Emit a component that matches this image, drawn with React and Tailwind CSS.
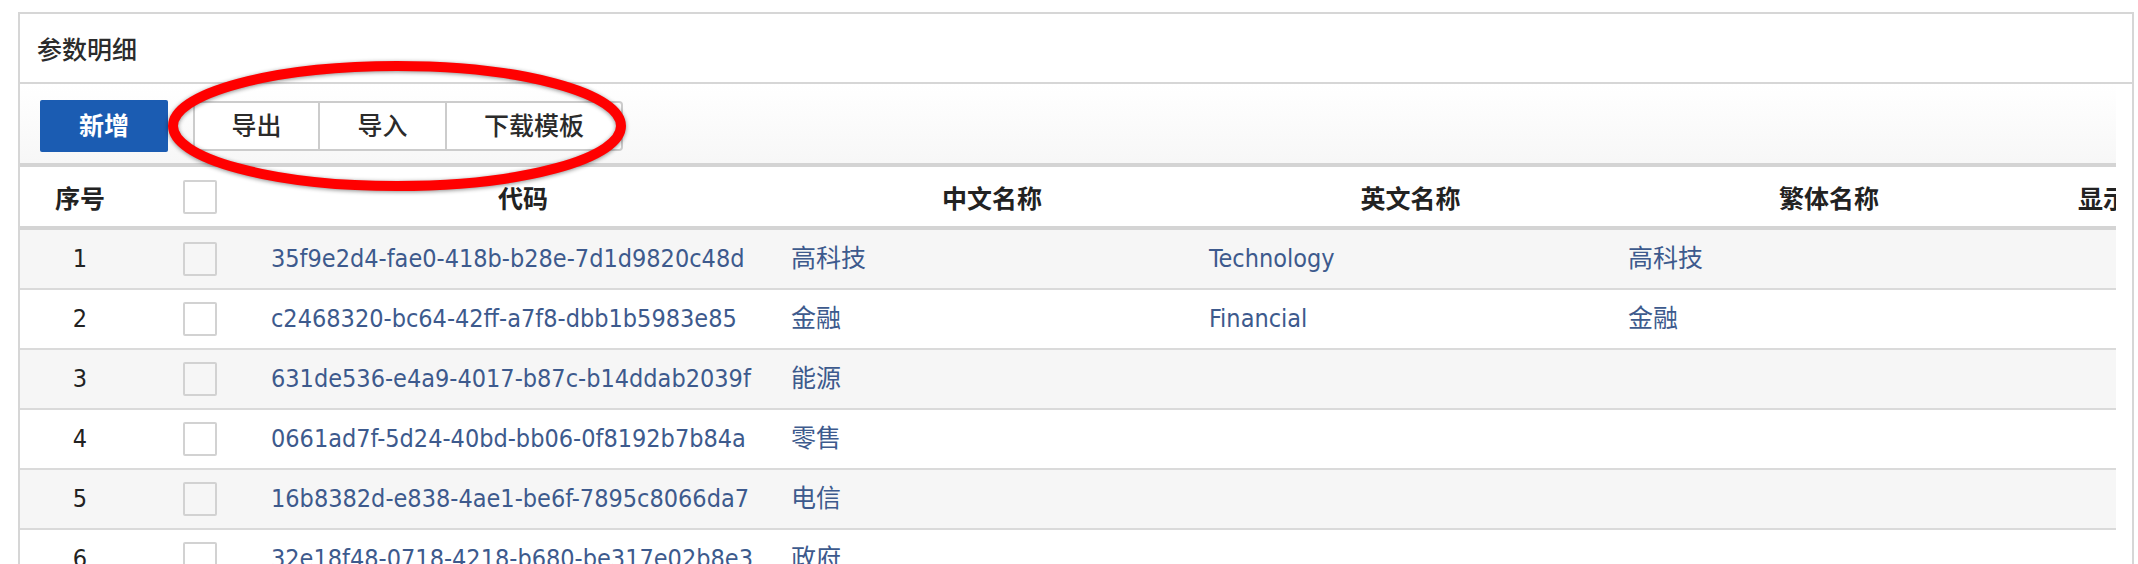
import React from 'react';

const rows = [
    { code: '35f9e2d4-fae0-418b-b28e-7d1d9820c48d', zh: '高科技', en: 'Technology', tw: '高科技' },
    { code: 'c2468320-bc64-42ff-a7f8-dbb1b5983e85', zh: '金融', en: 'Financial', tw: '金融' },
    { code: '631de536-e4a9-4017-b87c-b14ddab2039f', zh: '能源', en: '', tw: '' },
    { code: '0661ad7f-5d24-40bd-bb06-0f8192b7b84a', zh: '零售', en: '', tw: '' },
    { code: '16b8382d-e838-4ae1-be6f-7895c8066da7', zh: '电信', en: '', tw: '' },
    { code: '32e18f48-0718-4218-b680-be317e02b8e3', zh: '政府', en: '', tw: '' },
];

const Checkbox = () => (
    <div className="ml-[43px] w-[34px] h-[34px] border-2 border-[#d2d2d2] rounded-[2px]" />
);

const App = () => {
    return (
        <div
            className="relative w-[2138px] h-[564px] overflow-hidden bg-white pt-[12px] pl-[18px] text-[#333]"
            style={{ fontFamily: '"DejaVu Sans Condensed", "Noto Sans CJK SC", sans-serif' }}
        >
            <div className="w-[2116px] h-[600px] border-2 border-[#d6d6d6]">
                {/* Title */}
                <div className="h-[70px] flex items-center pl-[17px] pt-[5px] border-b-2 border-[#d6d6d6] text-[25px] font-medium text-[#2b2b2b]">
                    参数明细
                </div>

                <div className="w-[2096px] overflow-hidden">
                    {/* Toolbar */}
                    <div className="h-[83px] flex items-start gap-[25px] pt-[16px] pl-[20px] border-b-4 border-[#d4d4d4] bg-gradient-to-b from-white to-[#f7f7f7]">
                        <button className="w-[128px] h-[52px] pt-[2px] bg-[#1b5cb2] text-white text-[25px] font-bold rounded-[2px]">
                            新增
                        </button>
                        <div className="mt-[1px] h-[50px] flex border-2 border-[#cccccc] rounded-[4px] bg-white text-[25px] font-medium text-[#2b2b2b]">
                            <button className="w-[123px] h-full pt-[2px]">导出</button>
                            <button className="w-[127px] h-full pt-[2px] border-l-2 border-[#cccccc]">导入</button>
                            <button className="w-[176px] h-full pt-[2px] border-l-2 border-[#cccccc]">下载模板</button>
                        </div>
                    </div>

                    {/* Table header */}
                    <div className="h-[63px] flex items-center pt-[7px] border-b-4 border-[#d4d4d4] font-bold text-[25px] text-[#222] bg-white">
                        <div className="w-[120px] shrink-0 text-center">序号</div>
                        <div className="w-[123px] shrink-0 -mt-[7px]"><Checkbox /></div>
                        <div className="w-[520px] shrink-0 text-center">代码</div>
                        <div className="w-[418px] shrink-0 text-center">中文名称</div>
                        <div className="w-[419px] shrink-0 text-center">英文名称</div>
                        <div className="w-[418px] shrink-0 text-center">繁体名称</div>
                        <div className="w-[180px] shrink-0 text-center whitespace-nowrap">显示顺序</div>
                    </div>

                    {/* Rows */}
                    {rows.map((r, i) => (
                        <div
                            key={r.code}
                            className={`h-[60px] flex items-center border-b-2 border-[#dadada] text-[25px] ${i % 2 === 0 ? 'bg-[#f6f6f6]' : 'bg-white'}`}
                        >
                            <div className="w-[120px] shrink-0 text-center text-[#222]">{i + 1}</div>
                            <div className="w-[123px] shrink-0"><Checkbox /></div>
                            <div className="w-[520px] shrink-0 pl-[8px] text-[#3d5a8d] whitespace-nowrap">{r.code}</div>
                            <div className="w-[418px] shrink-0 pl-[8px] text-[#3d5a8d]">{r.zh}</div>
                            <div className="w-[419px] shrink-0 pl-[8px] text-[#3d5a8d]">{r.en}</div>
                            <div className="w-[418px] shrink-0 pl-[8px] text-[#3d5a8d]">{r.tw}</div>
                            <div className="w-[180px] shrink-0" />
                        </div>
                    ))}
                </div>
            </div>

            {/* Red annotation ellipse */}
            <svg
                className="absolute left-0 top-0 pointer-events-none drop-shadow-[0_1px_2px_rgba(0,0,0,0.45)]"
                width="2138"
                height="564"
            >
                <ellipse cx="397" cy="126" rx="224" ry="60" fill="none" stroke="#ff0000" strokeWidth="10" />
            </svg>
        </div>
    );
};

export default App;
